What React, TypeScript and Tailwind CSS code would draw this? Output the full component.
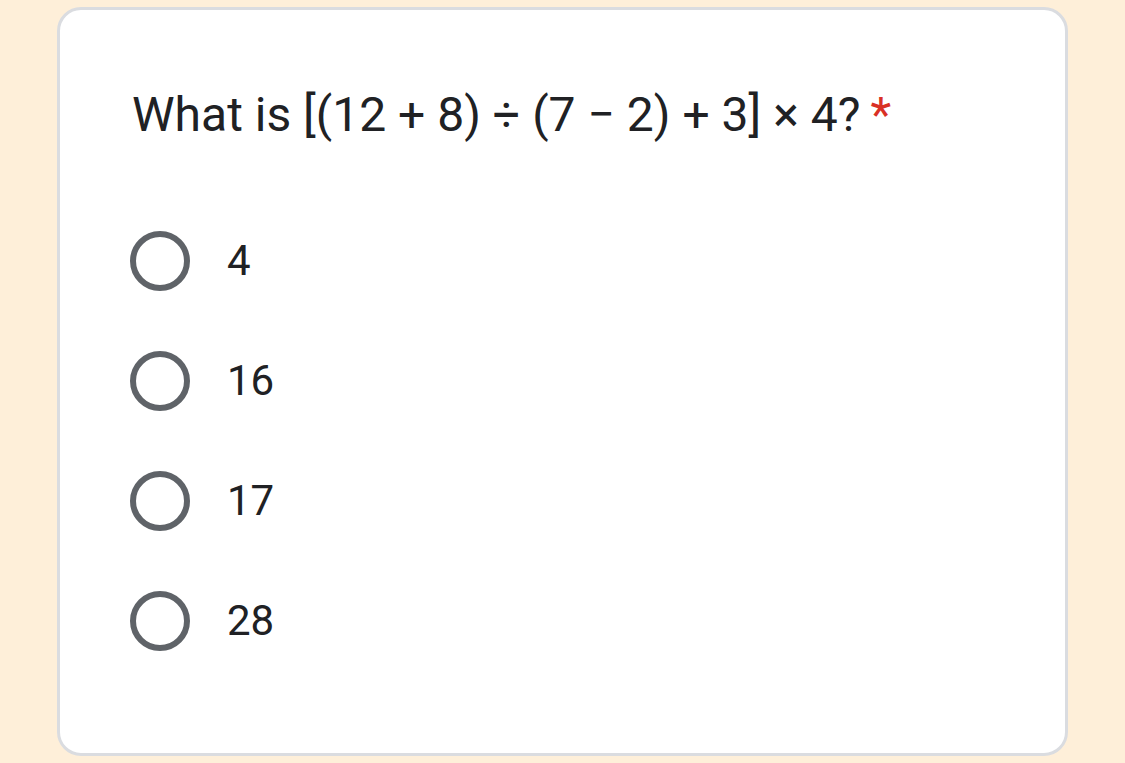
const options = ["4", "16", "17", "28"];

export default function App() {
  return (
    <div className="min-h-[763px] bg-[#feefd9] pt-[7px] font-['Roboto',sans-serif] text-[#202124]">
      <div className="mx-auto w-[1011px] h-[749px] rounded-[24px] border-[3px] border-[#dadce0] bg-white px-[70px] pt-[69px]">
        <h1 className="pl-[2px] text-[48px] leading-[72px] font-normal">
          What is [(12 + 8) ÷ (7 − 2) + 3] × 4?
          <span className="ml-[10px] text-[#d93025]">*</span>
        </h1>
        <div className="mt-[50px] flex flex-col">
          {options.map((opt) => (
            <label key={opt} className="flex h-[120px] items-center gap-[37px]">
              <span className="h-[60px] w-[60px] rounded-full border-[6px] border-[#5f6368]" />
              <span className="text-[42px] leading-none">{opt}</span>
            </label>
          ))}
        </div>
      </div>
    </div>
  );
}
